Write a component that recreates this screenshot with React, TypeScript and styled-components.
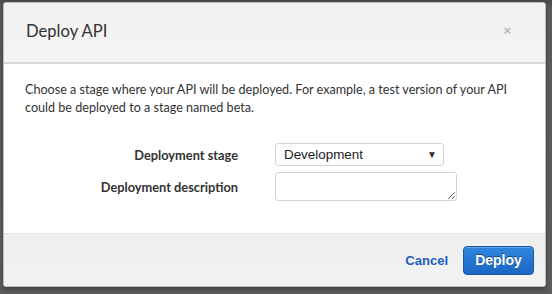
import styled, { createGlobalStyle } from "styled-components";

const GlobalStyle = createGlobalStyle`
  html, body {
    margin: 0;
    padding: 0;
    background: #585858;
  }
  body {
    font-family: Lato, "Open Sans", sans-serif;
    color: #333;
  }
`;

const Backdrop = styled.div`
  width: 552px;
  height: 294px;
  box-sizing: border-box;
  padding: 2px 6px 7px 3px;
  background: linear-gradient(to bottom, #4a4a4a 0, #5a5a5a 8px, #5c5c5c 100%);
`;

const Modal = styled.div`
  height: 100%;
  box-sizing: border-box;
  display: flex;
  flex-direction: column;
  background: #fff;
  border: 1px solid #bdbdbd;
  border-radius: 3px;
  box-shadow: 0 2px 4px rgba(0, 0, 0, 0.35);
  overflow: hidden;
`;

const Header = styled.div`
  height: 61px;
  flex: none;
  display: flex;
  align-items: center;
  justify-content: space-between;
  padding: 0 34px 4px 22px;
  box-sizing: border-box;
  background: linear-gradient(to bottom, #f1f1f1, #f4f4f4);
  border-bottom: 2px solid #d6d6d6;
`;

const Title = styled.h3`
  margin: 0;
  font-size: 16.6px;
  font-weight: 400;
  color: #333;
`;

const Close = styled.span`
  font-family: "Liberation Sans", Arial, sans-serif;
  font-size: 13px;
  font-weight: 700;
  color: #b8b8b8;
`;

const Body = styled.div`
  flex: 1;
  padding: 17px 22px 0 21px;
`;

const Intro = styled.p`
  margin: 0 0 26px;
  font-size: 12.6px;
  line-height: 18px;
  color: #333;
`;

const Form = styled.div`
  display: grid;
  grid-template-columns: 213px 1fr;
  column-gap: 37px;
  row-gap: 6px;
  align-items: center;
`;

const Label = styled.label`
  text-align: right;
  font-size: 12.8px;
  font-weight: 700;
  color: #333;
`;

const SelectBox = styled.div`
  width: 169px;
  height: 23px;
  box-sizing: border-box;
  display: flex;
  align-items: center;
  justify-content: space-between;
  padding: 0 6px 0 8px;
  border: 1px solid #d4d4d4;
  border-radius: 3px;
  background: #fff;
  font-family: "Liberation Sans", Arial, sans-serif;
  font-size: 13.4px;
  color: #222;
`;

const Caret = styled.span`
  font-size: 10px;
  color: #333;
`;

const TextArea = styled.textarea`
  width: 182px;
  height: 29px;
  box-sizing: border-box;
  border: 1px solid #d4d4d4;
  border-radius: 3px;
  margin: 0;
  padding: 3px 6px;
  font-family: "Liberation Sans", Arial, sans-serif;
  font-size: 13px;
  display: block;
`;

const Footer = styled.div`
  height: 52px;
  flex: none;
  display: flex;
  align-items: center;
  justify-content: flex-end;
  gap: 15px;
  padding: 0 11px 0 22px;
  background: linear-gradient(to bottom, #eeeeee, #f3f3f3);
  border-top: 1px solid #e2e2e2;
`;

const LinkButton = styled.button`
  border: none;
  background: none;
  padding: 0;
  font-family: "Liberation Sans", Arial, sans-serif;
  font-weight: 700;
  font-size: 13px;
  color: #1b5fbd;
  cursor: pointer;
`;

const PrimaryButton = styled.button`
  width: 71px;
  height: 29px;
  border: 1px solid #1a56a6;
  border-radius: 4px;
  background: linear-gradient(to bottom, #2f86dc, #1c66c4);
  color: #fff;
  font-family: "Liberation Sans", Arial, sans-serif;
  font-weight: 700;
  font-size: 14px;
  text-shadow: 0 -1px 0 rgba(0, 0, 0, 0.45);
  box-shadow: inset 0 1px 0 rgba(255, 255, 255, 0.25);
  cursor: pointer;
`;

export default function App() {
  return (
    <>
      <GlobalStyle />
      <Backdrop>
        <Modal>
          <Header>
            <Title>Deploy API</Title>
            <Close>×</Close>
          </Header>
          <Body>
            <Intro>
              Choose a stage where your API will be deployed. For example, a test version of your API
              could be deployed to a stage named beta.
            </Intro>
            <Form>
              <Label>Deployment stage</Label>
              <SelectBox>
                <span>Development</span>
                <Caret>▼</Caret>
              </SelectBox>
              <Label>Deployment description</Label>
              <TextArea />
            </Form>
          </Body>
          <Footer>
            <LinkButton>Cancel</LinkButton>
            <PrimaryButton>Deploy</PrimaryButton>
          </Footer>
        </Modal>
      </Backdrop>
    </>
  );
}
